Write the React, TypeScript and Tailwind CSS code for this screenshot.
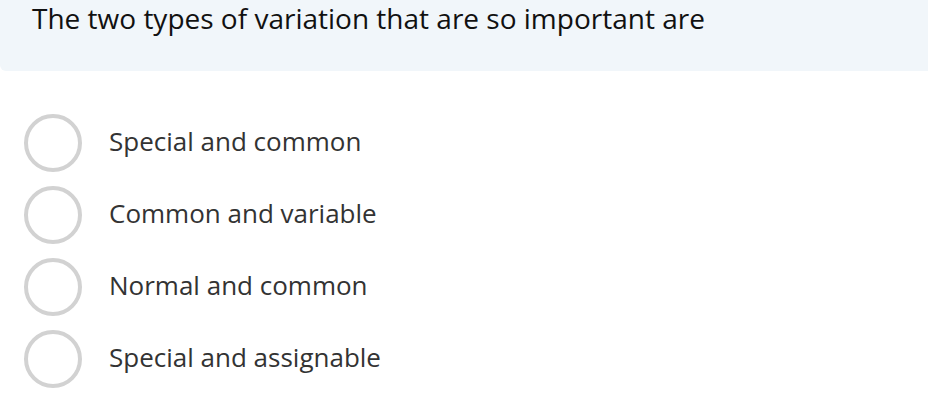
import React from "react";

const options = [
  "Special and common",
  "Common and variable",
  "Normal and common",
  "Special and assignable",
];

export default function App() {
  return (
    <div
      className="w-[928px] h-[420px] bg-white overflow-hidden"
      style={{ fontFamily: '"Open Sans", sans-serif' }}
    >
      <div className="h-[71px] bg-[#f1f6fa] rounded-bl-[6px] pl-[32px]">
        <p className="text-[28px] leading-[37px] text-[#111111]">
          The two types of variation that are so important are
        </p>
      </div>
      <div className="flex flex-col gap-[14px] pt-[43px] pl-[24px]">
        {options.map((o) => (
          <div key={o} className="flex items-center gap-[27px]">
            <div className="w-[58px] h-[58px] rounded-full border-[4px] border-[#d2d2d2] shrink-0" />
            <span className="text-[26px] leading-[32px] text-[#333333] -translate-y-[2px]">{o}</span>
          </div>
        ))}
      </div>
    </div>
  );
}
